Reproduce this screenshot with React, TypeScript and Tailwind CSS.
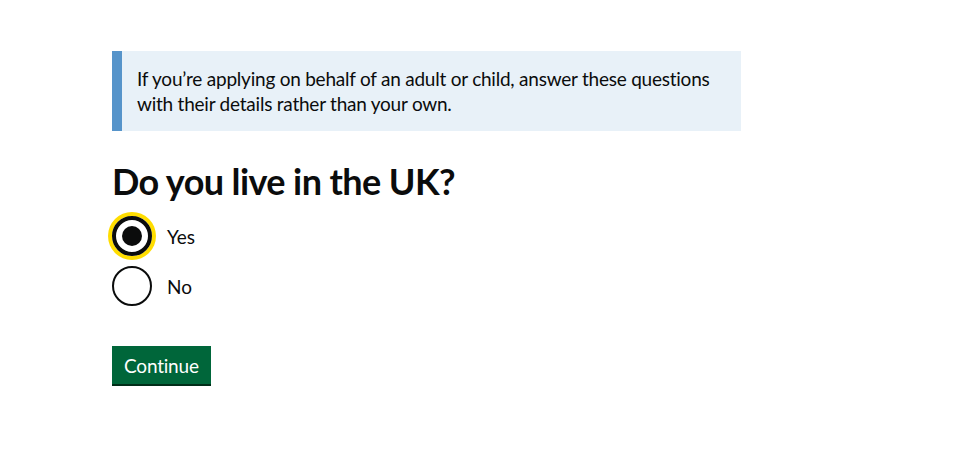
import { useState } from "react";

const options = ["Yes", "No"];

export default function App() {
  const [choice, setChoice] = useState<string>("Yes");

  return (
    <div
      className="min-h-screen bg-white text-[#0b0c0c]"
      style={{ fontFamily: 'Lato, Arial, sans-serif' }}
    >
      <main className="pl-[112px] pt-[51px] w-[741px]">
        {/* Inset notice */}
        <div className="border-l-[10px] border-[#5694ca] bg-[#e8f1f8] px-[15px] py-[15px] text-[19px] leading-[25px] tracking-[-0.23px] whitespace-nowrap">
          <p>
            If you’re applying on behalf of an adult or child, answer these questions
            <br />
            with their details rather than your own.
          </p>
        </div>

        <fieldset className="mt-[30px]">
          <legend className="mb-[15px] text-[36px] leading-[40px] font-bold tracking-[-0.6px]">
            Do you live in the UK?
          </legend>

          <div className="flex flex-col gap-[10px]">
            {options.map((opt) => {
              const checked = choice === opt;
              return (
                <label
                  key={opt}
                  className="flex items-center h-[40px] cursor-pointer"
                  onClick={() => setChoice(opt)}
                >
                  <span
                    className={
                      checked
                        ? "w-[40px] h-[40px] rounded-full border-4 border-[#0b0c0c] shadow-[0_0_0_4px_#ffdd00] flex items-center justify-center"
                        : "w-[40px] h-[40px] rounded-full border-2 border-[#0b0c0c] flex items-center justify-center"
                    }
                  >
                    {checked && <span className="w-[20px] h-[20px] rounded-full bg-[#0b0c0c]" />}
                  </span>
                  <span className="ml-[15px] text-[19px] leading-[25px]">{opt}</span>
                </label>
              );
            })}
          </div>
        </fieldset>

        <button className="mt-[40px] bg-[#00663a] text-white text-[19px] leading-[19px] tracking-[-0.2px] px-[12px] pt-[10px] pb-[9px] shadow-[0_2px_0_#002d18]">
          Continue
        </button>
      </main>
    </div>
  );
}
